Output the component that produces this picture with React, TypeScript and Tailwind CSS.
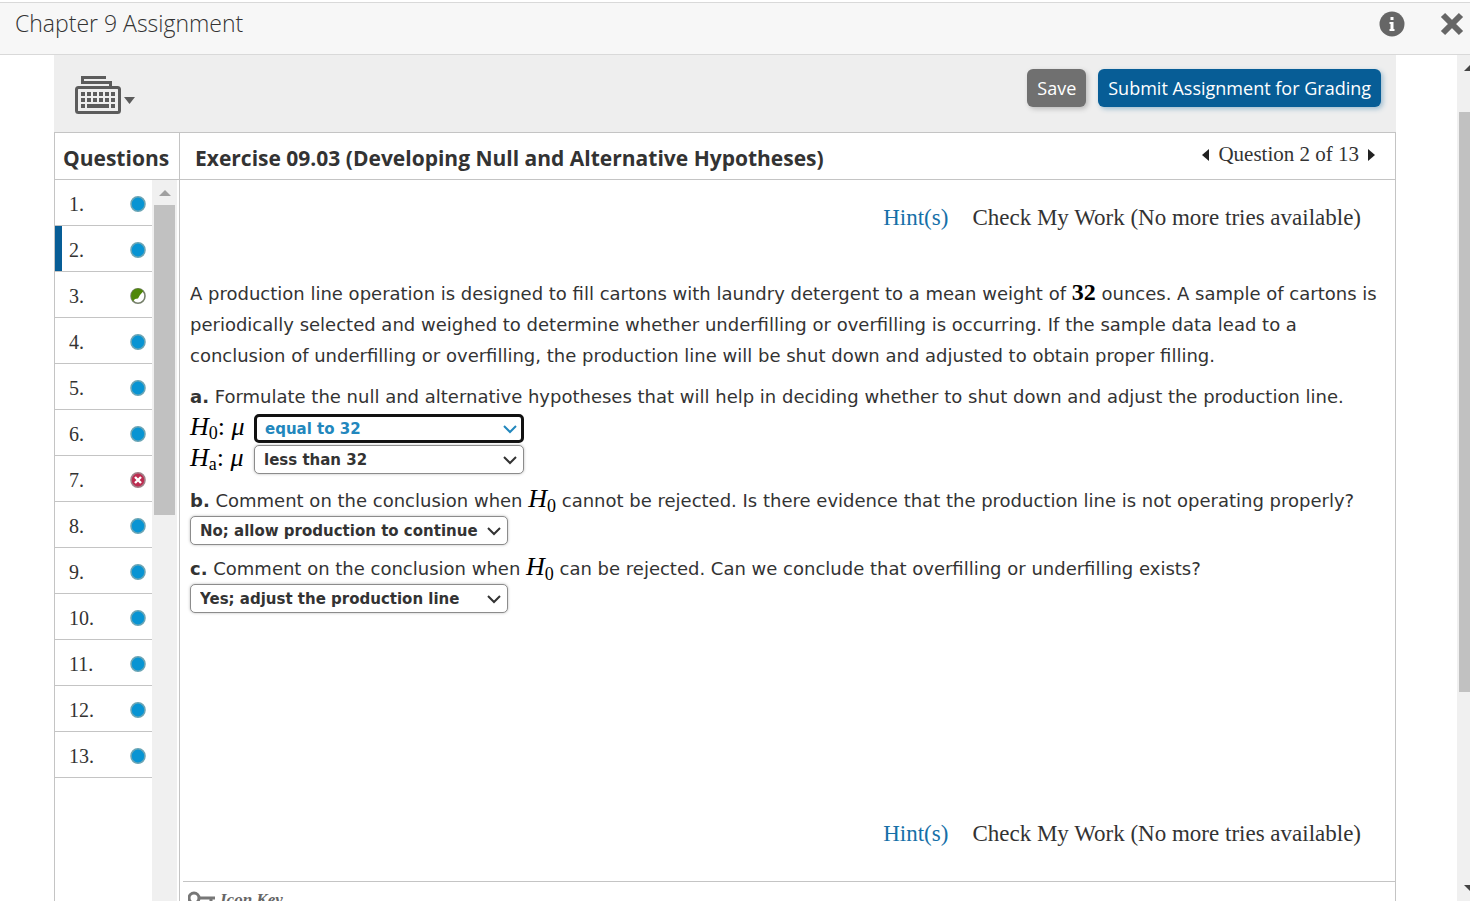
import React from 'react';

type Status = 'submitted' | 'partial' | 'incorrect';

const questions: Status[] = [
  'submitted', 'submitted', 'partial', 'submitted', 'submitted', 'submitted', 'incorrect',
  'submitted', 'submitted', 'submitted', 'submitted', 'submitted', 'submitted',
];

const StatusIcon: React.FC<{ status: Status }> = ({ status }) => (
  <svg width="16" height="18" viewBox="0 0 16 18" aria-label={status}>
    {status === 'submitted' && <ellipse cx="8" cy="9" rx="7" ry="7.3" fill="#0894d3" stroke="#6ba5b5" strokeWidth="1.6" />}
    {status === 'partial' && (
      <>
        <ellipse cx="8" cy="9" rx="7" ry="7.3" fill="#fff" stroke="#76806b" strokeWidth="1.6" />
        <path d="M13.3 4.2C10.5.8 6 .8 3.2 3.6.4 6.4.6 11 3 14.2l2-2.2 3-.5 2-3.5z" fill="#4f8709" />
      </>
    )}
    {status === 'incorrect' && (
      <>
        <ellipse cx="8" cy="9" rx="7" ry="7.3" fill="#bd2c50" stroke="#a18089" strokeWidth="1.6" />
        <path d="M5 6l6 6M11 6l-6 6" stroke="#fff" strokeWidth="2.4" />
      </>
    )}
  </svg>
);

const KeyboardIcon = () => (
  <svg width="62" height="40" viewBox="0 0 62 40" fill="none" aria-hidden="true">
    <path d="M32 1.5H8.500V6.500H36.500v5" stroke="#5c5c5c" strokeWidth="3" />
    <rect x="2.5" y="11.5" width="43" height="25" rx="2" stroke="#5c5c5c" strokeWidth="3" />
    <g fill="#5c5c5c">
      {[16, 22].map((y) => [7, 13, 19, 25, 31, 37].map((x) => <rect key={`${x}-${y}`} x={x} y={y} width="4" height="4" />))}
      <path d="M7 28h4v4H7zM13 28h22v4H13zM37 28h4v4h-4z" />
      <path d="M50 21h11l-5.5 7z" />
    </g>
  </svg>
);

interface AnswerSelectProps {
  label: string;
  value: string;
  width: string;
  active?: boolean;
}

const AnswerSelect: React.FC<AnswerSelectProps> = ({ label, value, width, active }) => (
  <span className={`relative inline-block h-[29px] ${width}`}>
    <select
      aria-label={label}
      defaultValue={value}
      className={`block h-full w-full appearance-none rounded-[5px] bg-white font-['DejaVu_Sans',sans-serif] text-[15px] leading-5 font-bold outline-none
        ${active ? 'border-[3px] border-[#111] pl-2 text-[#2287bd]' : 'border border-[#8c8c8c] pl-[9px] text-[#333] shadow-[0_0_3px_#bbb]'}`}
    >
      <option>{value}</option>
    </select>
    <svg
      className={`pointer-events-none absolute right-[7px] top-[11px] ${active ? 'text-[#2287bd]' : 'text-[#333]'}`}
      width="14" height="10" viewBox="0 0 14 10" fill="none" stroke="currentColor" strokeWidth="2"
    >
      <path d="M1 1l6 6 6-6" />
    </svg>
  </span>
);

const Hypothesis: React.FC<{ sub: string }> = ({ sub }) => (
  <span className="font-['Liberation_Serif',serif] text-[26px] leading-none text-black">
    <i>H</i>
    <sub className="text-lg leading-none">{sub}</sub>
  </span>
);

const CheckWork = () => (
  <div className="flex h-8 items-center justify-end gap-6 pr-[34px] pt-[2px] font-['Liberation_Serif',serif] text-[23px] text-[#333]">
    <a href="#hints" className="text-[#1670a8]">Hint(s)</a>
    <span>Check My Work (No more tries available)</span>
  </div>
);

const Sidebar = () => (
  <aside className="flex w-[126px] shrink-0 flex-col border-x border-[#c4c4c4]">
    <h2 className="flex h-[47px] shrink-0 items-center border-b border-[#c4c4c4] pl-2 pt-[6px] text-[21px] font-bold">Questions</h2>
    <div className="flex min-h-0 flex-1">
      <nav className="flex-1">
        {questions.map((status, i) => (
          <a
            key={i}
            href={`#question-${i + 1}`}
            className="flex h-[46px] items-center border-b border-[#c4c4c4] pr-[6px] font-['Liberation_Serif',serif] text-xl"
          >
            <span className={`h-full w-[7px] ${i === 1 ? 'bg-[#075d96]' : ''}`} />
            <span className="flex-1 pl-[7px] pt-[2px]">{i + 1}.</span>
            <span className="pt-[2px]"><StatusIcon status={status} /></span>
          </a>
        ))}
      </nav>
      <div className="mr-[2px] flex w-[25px] flex-col items-center bg-[#f0f0f0]">
        <svg className="my-[9px] shrink-0" width="12" height="7" viewBox="0 0 12 7"><path d="M0 7l6-6 6 6z" fill="#a0a0a0" /></svg>
        <div className="h-[310px] w-[21px] shrink-0 bg-[#c1c1c1]" />
      </div>
    </div>
  </aside>
);

export default function App() {
  return (
    <div className="flex h-screen flex-col overflow-hidden bg-white pb-[7px] pt-[2px] font-['Open_Sans',sans-serif] text-[#333]">
      <header className="flex h-[53px] shrink-0 items-center justify-between border-y border-[#d9d9d9] bg-[#f7f7f7] pb-[10px] pl-[15px] pr-[5px]">
        <h1 className="text-[23px] font-[350] text-[#333]">Chapter 9 Assignment</h1>
        <div className="flex items-center gap-[34px]">
          <button aria-label="Information">
            <svg width="26" height="26" viewBox="0 0 26 26">
              <circle cx="13" cy="13" r="12.5" fill="#666" />
              <path d="M11.500 6h3v3h-3zM10.500 11h4v7h1v2h-5v-2h1v-5h-1z" fill="#fff" />
            </svg>
          </button>
          <button aria-label="Close">
            <svg width="26" height="26" viewBox="0 0 26 26"><path d="M4 4l18 18M22 4L4 22" stroke="#666" strokeWidth="6" /></svg>
          </button>
        </div>
      </header>

      <div className="flex min-h-0 flex-1">
        <div className="ml-[54px] mr-[61px] flex min-w-0 flex-1 flex-col">
          {/* Toolbar */}
          <div className="flex h-[78px] shrink-0 items-start justify-between border-b border-[#c4c4c4] bg-[#eee] pl-5 pr-[15px] pt-[14px]">
            <button aria-label="Keyboard" className="pt-[7px]"><KeyboardIcon /></button>
            <div className="flex gap-3 text-lg text-white">
              <button className="h-[38px] rounded-md bg-[#707070] px-[10px] shadow-[2px_2px_5px_#bbb]">Save</button>
              <button className="h-[38px] rounded-md bg-[#075d96] px-[10px] shadow-[2px_2px_5px_#9fbdd0]">Submit Assignment for Grading</button>
            </div>
          </div>

          <div className="flex min-h-0 flex-1">
            <Sidebar />
            <main className="flex min-w-0 flex-1 flex-col border-r border-[#c4c4c4]">
              <div className="flex h-[47px] shrink-0 items-center justify-between border-b border-[#c4c4c4] pl-[15px] pr-5">
                <h2 className="pt-[6px] text-[21px] font-bold">Exercise 09.03 (Developing Null and Alternative Hypotheses)</h2>
                <div className="flex items-center gap-[9px] pb-[2px] font-['Liberation_Serif',serif] text-[21px]">
                  <button aria-label="Previous question">
                    <svg width="7" height="12" viewBox="0 0 7 12"><path d="M7 0v12L0 6z" fill="#222" /></svg>
                  </button>
                  <span>Question 2 of 13</span>
                  <button aria-label="Next question">
                    <svg width="7" height="12" viewBox="0 0 7 12"><path d="M0 0v12l7-6z" fill="#222" /></svg>
                  </button>
                </div>
              </div>

              <div className="pl-[10px] pt-5 font-['DejaVu_Sans',sans-serif] text-lg leading-[31px]">
                <CheckWork />
                <p className="mt-[46px] pr-2">
                  A production line operation is designed to fill cartons with laundry detergent to a mean weight of{' '}
                  <b className="font-['Liberation_Serif',serif] text-2xl leading-none text-black">32</b> ounces. A sample of cartons is
                  periodically selected and weighed to determine whether underfilling or overfilling is occurring. If the sample data lead to a
                  conclusion of underfilling or overfilling, the production line will be shut down and adjusted to obtain proper filling.
                </p>
                <p className="mt-[10px]"><b>a.</b> Formulate the null and alternative hypotheses that will help in deciding whether to shut down and adjust the production line.</p>
                <div className="pt-[1px]">
                  {[
                    { sub: '0', value: 'equal to 32', active: true },
                    { sub: 'a', value: 'less than 32', active: false },
                  ].map((row) => (
                    <div key={row.sub} className="flex h-[31px] items-center">
                      <div className="w-16 shrink-0 whitespace-nowrap pb-1 font-['Liberation_Serif',serif] text-[26px] leading-none text-black">
                        <Hypothesis sub={row.sub} />: <i>μ</i>
                      </div>
                      <AnswerSelect label={`H${row.sub} mean`} value={row.value} width="w-[270px]" active={row.active} />
                    </div>
                  ))}
                </div>
                <p className="mt-[10px]"><b>b.</b> Comment on the conclusion when <Hypothesis sub="0" /> cannot be rejected. Is there evidence that the production line is not operating properly?</p>
                <div className="flex h-[29px]"><AnswerSelect label="Conclusion for b" value="No; allow production to continue" width="w-[318px]" /></div>
                <p className="mt-2"><b>c.</b> Comment on the conclusion when <Hypothesis sub="0" /> can be rejected. Can we conclude that overfilling or underfilling exists?</p>
                <div className="flex h-[29px]"><AnswerSelect label="Conclusion for c" value="Yes; adjust the production line" width="w-[318px]" /></div>
              </div>

              <div className="mt-auto shrink-0">
                <CheckWork />
                <div className="ml-[3px] mt-8 h-5 overflow-hidden border-t border-[#c4c4c4]">
                  <div className="flex gap-1 pl-[5px] pt-[8px] font-['Liberation_Serif',serif] text-[17px] leading-5 font-bold italic text-[#666]">
                    <svg width="28" height="16" viewBox="0 0 28 16" fill="none" stroke="#777" strokeWidth="3"><circle cx="6" cy="8" r="5" /><path d="M10 8h17M23 8v5" /></svg>
                    <span>Icon Key</span>
                  </div>
                </div>
              </div>
            </main>
          </div>
        </div>

        {/* Page scrollbar */}
        <div className="flex w-[13px] shrink-0 flex-col items-end overflow-hidden bg-[#f0f0f0]">
          <svg className="mt-[9px] shrink-0" width="6" height="7" viewBox="0 0 6 7"><path d="M0 7l6-6v6z" fill="#444" /></svg>
          <div className="mt-[41px] h-[580px] w-[11px] shrink-0 bg-[#c1c1c1]" />
          <svg className="mb-[9px] mt-auto shrink-0" width="6" height="7" viewBox="0 0 6 7"><path d="M0 0h6v6z" fill="#444" /></svg>
        </div>
      </div>
    </div>
  );
}
